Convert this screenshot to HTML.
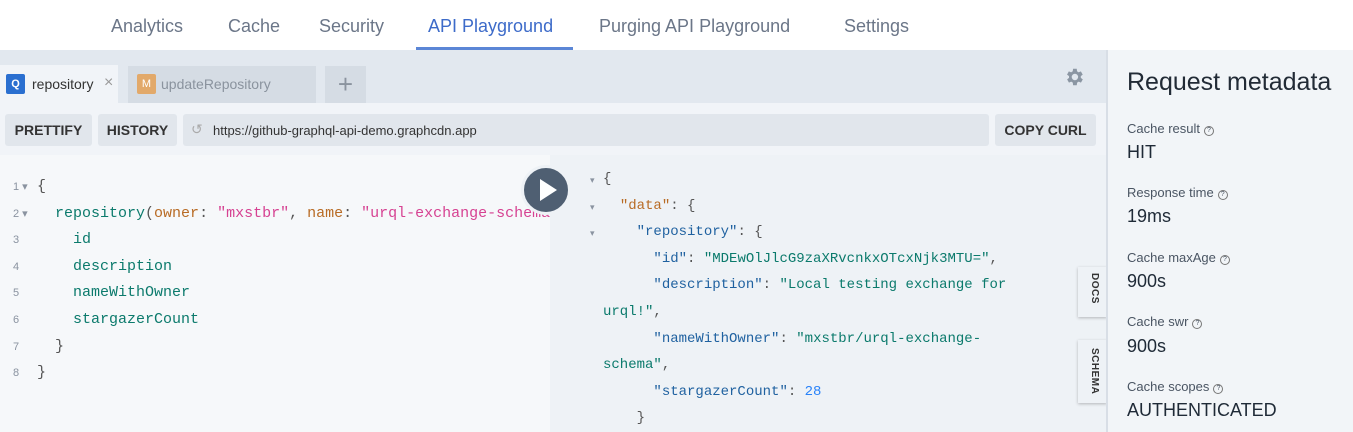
<!DOCTYPE html>
<html><head><style>
*{margin:0;padding:0;box-sizing:border-box}
body{width:1353px;height:432px;overflow:hidden;background:#fff;font-family:"Liberation Sans",sans-serif;position:relative}
.a{position:absolute;white-space:nowrap}
.nav{top:16px;font-size:18px;color:#6b7688}
.mono{font-family:"Liberation Mono",monospace;font-size:14px;white-space:pre}
.ln{color:#8a93a0;font-size:11px;font-family:"Liberation Sans",sans-serif}
.btn{background:#e1e6ec;border-radius:3px;font-weight:bold;font-size:14px;color:#333;text-align:center;line-height:32px;height:32px}
.k{color:#1f61a0}.g{color:#0b7a6c}.s{color:#d64292}.o{color:#b86b24}.p{color:#555}.n{color:#2882f9}.str{color:#0b7a6c}
.lab{font-size:13px;color:#4a5563}.val{font-size:18px;color:#1f2a37}
.q{display:inline-block;width:10px;height:10px;border:1px solid #777;border-radius:50%;font-size:7px;text-align:center;line-height:8px;margin-left:4px;vertical-align:1px}
</style></head><body>
<div class="a nav" style="left:111px">Analytics</div>
<div class="a nav" style="left:228px">Cache</div>
<div class="a nav" style="left:319px">Security</div>
<div class="a nav" style="left:428px;color:#3d6bc9">API Playground</div>
<div class="a nav" style="left:599px">Purging API Playground</div>
<div class="a nav" style="left:844px">Settings</div>
<div class="a" style="left:416px;top:47px;width:157px;height:3px;background:#5b86d6"></div>

<div class="a" style="left:0;top:50px;width:1107px;height:53px;background:#e2e8ef"></div>
<div class="a" style="left:0;top:65px;width:118px;height:38px;background:#f1f4f8"></div>
<div class="a" style="left:6px;top:74px;width:19px;height:20px;background:#2a6fd0;border-radius:2px;color:#fff;font-size:11px;font-weight:bold;text-align:center;line-height:20px">Q</div>
<div class="a" style="left:32px;top:76px;font-size:14px;color:#333">repository</div>
<div class="a" style="left:104px;top:74px;font-size:16px;color:#999">×</div>
<div class="a" style="left:128px;top:66px;width:188px;height:37px;background:#d5dce4"></div>
<div class="a" style="left:137px;top:74px;width:19px;height:20px;background:#e2a96a;border-radius:2px;color:#fff;font-size:11px;text-align:center;line-height:20px">M</div>
<div class="a" style="left:161px;top:76px;font-size:14px;color:#8a939e">updateRepository</div>
<div class="a" style="left:325px;top:66px;width:41px;height:37px;background:#d5dce4;color:#8a939e;font-size:26px;text-align:center;line-height:36px">+</div>
<svg class="a" style="left:1063px;top:66px" width="22" height="22" viewBox="0 0 24 24"><path fill="#8b96a3" d="M19.4 13a7.5 7.5 0 0 0 0-2l2.1-1.6-2-3.5-2.5 1a7.4 7.4 0 0 0-1.7-1L15 3h-4l-.4 2.9a7.4 7.4 0 0 0-1.7 1l-2.5-1-2 3.5L6.6 11a7.5 7.5 0 0 0 0 2l-2.1 1.6 2 3.5 2.5-1c.5.4 1.1.7 1.7 1L11 21h4l.4-2.9c.6-.3 1.2-.6 1.7-1l2.5 1 2-3.5zM13 15.5a3.5 3.5 0 1 1 0-7 3.5 3.5 0 0 1 0 7z"/></svg>

<div class="a" style="left:0;top:103px;width:1107px;height:52px;background:#f1f4f8"></div>
<div class="a btn" style="left:5px;top:114px;width:87px">PRETTIFY</div>
<div class="a btn" style="left:98px;top:114px;width:79px">HISTORY</div>
<div class="a" style="left:183px;top:114px;width:806px;height:32px;background:#e1e6ec;border-radius:3px"></div>
<div class="a" style="left:191px;top:121px;font-size:14px;color:#aaa">↺</div>
<div class="a" style="left:213px;top:123px;font-size:13px;color:#333">https://github-graphql-api-demo.graphcdn.app</div>
<div class="a btn" style="left:995px;top:114px;width:101px">COPY CURL</div>

<div class="a" style="left:0;top:155px;width:550px;height:277px;background:#f6f8fa"></div>
<div class="a" style="left:550px;top:155px;width:557px;height:277px;background:#eef2f6"></div>

<div class="a ln" style="left:13px;top:174px;line-height:26.6px;white-space:pre">1 ▾
2 ▾
3
4
5
6
7
8</div>
<div class="a mono" style="left:37px;top:174px;line-height:26.6px;font-size:15px"><span class="p">{</span>
  <span class="g">repository</span><span class="p">(</span><span class="o">owner</span><span class="p">: </span><span class="s">"mxstbr"</span><span class="p">, </span><span class="o">name</span><span class="p">: </span><span class="s">"urql-exchange-schema"</span>
    <span class="g">id</span>
    <span class="g">description</span>
    <span class="g">nameWithOwner</span>
    <span class="g">stargazerCount</span>
  <span class="p">}</span>
<span class="p">}</span></div>
<div class="a" style="left:521px;top:165px;width:50px;height:50px;border-radius:50%;background:#4f5f72;border:3px solid #eef2f6"></div>
<svg class="a" style="left:538px;top:178px" width="20" height="24"><path d="M2 1L19 12L2 23Z" fill="#fff"/></svg>

<div class="a ln" style="left:590px;top:167px;line-height:26.6px;white-space:pre;font-size:9px">▾
▾
▾</div>
<div class="a mono" style="left:603px;top:166px;line-height:26.6px"><span class="p">{</span>
  <span class="o">"data"</span><span class="p">: {</span>
    <span class="k">"repository"</span><span class="p">: {</span>
      <span class="k">"id"</span><span class="p">: </span><span class="str">"MDEwOlJlcG9zaXRvcnkxOTcxNjk3MTU="</span><span class="p">,</span>
      <span class="k">"description"</span><span class="p">: </span><span class="str">"Local testing exchange for</span></div>
<div class="a mono" style="left:603px;top:299px;line-height:26.6px"><span class="str">urql!"</span><span class="p">,</span></div>
<div class="a mono" style="left:603px;top:326px;line-height:26.6px">      <span class="k">"nameWithOwner"</span><span class="p">: </span><span class="str">"mxstbr/urql-exchange-</span></div>
<div class="a mono" style="left:603px;top:352px;line-height:26.6px"><span class="str">schema"</span><span class="p">,</span>
      <span class="k">"stargazerCount"</span><span class="p">: </span><span class="n">28</span>
    <span class="p">}</span></div>

<div class="a" style="left:1078px;top:267px;width:29px;height:50px;background:#eef2f6;box-shadow:0 1px 3px rgba(0,0,0,.25)"></div>
<div class="a" style="transform:rotate(90deg);transform-origin:0 0;left:1100px;top:273px;font-size:10px;font-weight:bold;color:#333;letter-spacing:.5px">DOCS</div>
<div class="a" style="left:1078px;top:340px;width:29px;height:63px;background:#eef2f6;box-shadow:0 1px 3px rgba(0,0,0,.25)"></div>
<div class="a" style="transform:rotate(90deg);transform-origin:0 0;left:1100px;top:348px;font-size:10px;font-weight:bold;color:#333;letter-spacing:.5px">SCHEMA</div>

<div class="a" style="left:1106px;top:50px;width:247px;height:382px;background:#f2f5f8;border-left:2px solid #d8dee6"></div>
<div class="a" style="left:1127px;top:68px;font-size:25px;color:#222b36">Request metadata</div>
<div class="a lab" style="left:1127px;top:121px">Cache result<span class="q">?</span></div>
<div class="a val" style="left:1127px;top:142px">HIT</div>
<div class="a lab" style="left:1127px;top:185px">Response time<span class="q">?</span></div>
<div class="a val" style="left:1127px;top:206px">19ms</div>
<div class="a lab" style="left:1127px;top:250px">Cache maxAge<span class="q">?</span></div>
<div class="a val" style="left:1127px;top:271px">900s</div>
<div class="a lab" style="left:1127px;top:314px">Cache swr<span class="q">?</span></div>
<div class="a val" style="left:1127px;top:336px">900s</div>
<div class="a lab" style="left:1127px;top:379px">Cache scopes<span class="q">?</span></div>
<div class="a val" style="left:1127px;top:400px">AUTHENTICATED</div>
</body></html>
